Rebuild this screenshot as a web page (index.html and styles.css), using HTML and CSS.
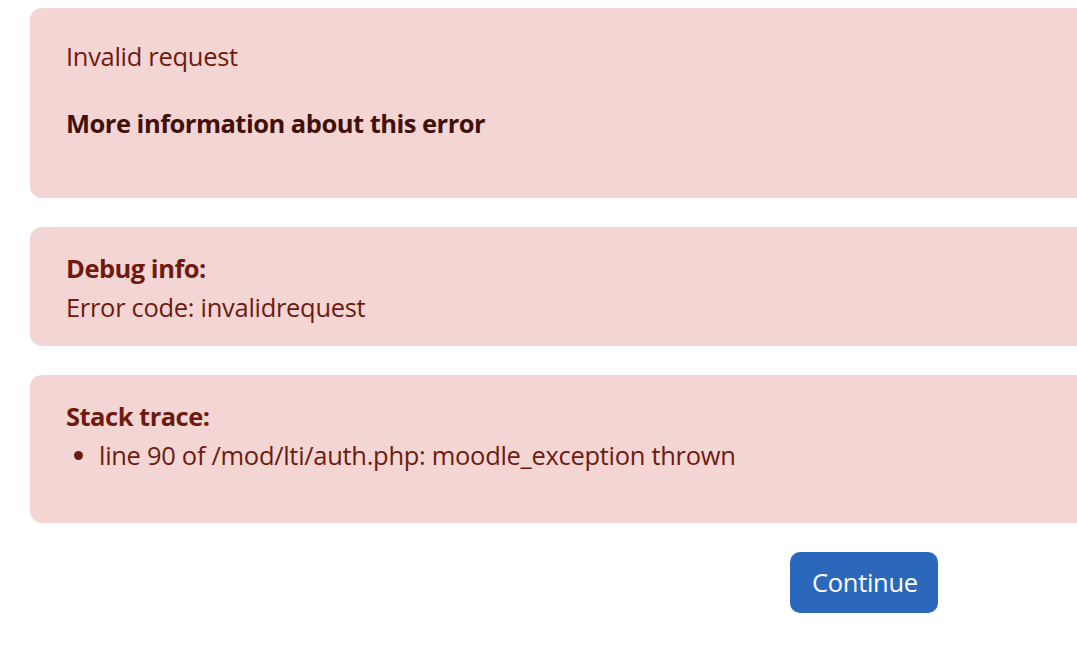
FILE: index.html
```html
<!DOCTYPE html>
<html lang="en">
<head>
<meta charset="utf-8">
<title>Error</title>
<link rel="stylesheet" href="styles.css">
</head>
<body>
<div class="page">
  <div class="alert alert-first">
    <p class="errormessage">Invalid request</p>
    <p class="errorcode"><a class="alert-link" href="#">More information about this error</a></p>
  </div>
  <div class="alert">
    <p class="label">Debug info:</p>
    <p class="plain">Error code: invalidrequest</p>
  </div>
  <div class="alert alert-trace">
    <p class="label">Stack trace:</p>
    <ul class="trace">
      <li>line 90 of /mod/lti/auth.php: moodle_exception thrown</li>
    </ul>
  </div>
  <div class="actions">
    <button class="btn-primary" type="button">Continue</button>
  </div>
</div>
</body>
</html>
```

FILE: styles.css
```css
html, body {
  margin: 0;
  padding: 0;
  overflow: hidden;
  background: #ffffff;
}

body {
  font-family: "Open Sans", "Noto Sans", sans-serif;
  font-size: 25.5px;
  letter-spacing: -0.3px;
  line-height: 39px;
  color: #6e1a11;
}

.page {
  width: 1668px;
  padding: 8px 0 0 30px;
  display: flex;
  flex-direction: column;
  gap: 29px;
}

.alert {
  background: #f3d6d3;
  border-radius: 12px;
  padding: 22px 35px 19px 36px;
}

.alert p {
  margin: 0;
}

.alert-first {
  padding-top: 29px;
  padding-bottom: 27px;
}

.alert-first .errormessage {
  margin-bottom: 28px;
}

.alert-first .errorcode {
  margin-bottom: 28px;
}

.alert-link {
  color: #420f0a;
  font-weight: 700;
  letter-spacing: -0.5px;
  text-decoration: none;
}

.label {
  font-weight: 700;
  letter-spacing: -0.5px;
}

.alert-trace {
  padding-bottom: 20px;
}

.trace {
  margin: 0 0 28px 0;
  padding-left: 33px;
}

.actions {
  display: flex;
  justify-content: center;
}

.btn-primary {
  font-family: "Open Sans", "Noto Sans", sans-serif;
  font-size: 25.5px;
  letter-spacing: -0.3px;
  line-height: 39px;
  color: #ffffff;
  background: #2b68bc;
  border: none;
  border-radius: 10px;
  padding: 11px 22px;
  width: 148px;
}
```
